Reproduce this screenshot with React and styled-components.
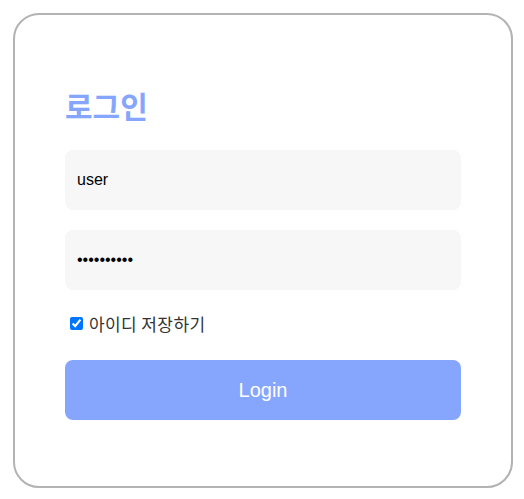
import React from "react";
import styled, { createGlobalStyle } from "styled-components";

const Global = createGlobalStyle`
  html, body { margin: 0; padding: 0; background: #ffffff; }
  body { font-family: "Liberation Sans", "Noto Sans CJK KR", sans-serif; }
`;

const Page = styled.div`
  padding: 13px;
`;

const Card = styled.form`
  box-sizing: border-box;
  width: 500px;
  height: 475px;
  border: 2px solid #b3b3b3;
  border-radius: 26px;
  padding: 68px 50px 0;
  display: flex;
  flex-direction: column;
`;

const Title = styled.h2`
  margin: 0 0 23px;
  font-family: "Noto Sans CJK KR", "Liberation Sans", sans-serif;
  font-size: 30px;
  font-weight: 700;
  line-height: 44px;
  color: #86a6fe;
`;

const Input = styled.input`
  box-sizing: border-box;
  width: 396px;
  height: 60px;
  border: none;
  outline: none;
  border-radius: 8px;
  background: #f7f7f7;
  padding: 0 12px;
  margin-bottom: ${(p) => p.$gap}px;
  font-family: "Liberation Sans", "Noto Sans CJK KR", sans-serif;
  font-size: 16px;
  color: #000;
`;

const CheckRow = styled.label`
  display: flex;
  align-items: center;
  gap: 6px;
  height: 26px;
  margin-bottom: 24px;
  font-family: "Noto Sans CJK KR", "Liberation Sans", sans-serif;
  font-size: 17px;
  letter-spacing: 0.4px;
  color: #333;
  padding-left: 2px;
`;

const Check = styled.input`
  margin: 0 0 0 3px;
  width: 13px;
  height: 13px;
  accent-color: #0075ff;
`;

const Button = styled.button`
  width: 396px;
  height: 60px;
  border: none;
  border-radius: 8px;
  background: #86a6fe;
  color: #ffffff;
  font-family: "Liberation Sans", "Noto Sans CJK KR", sans-serif;
  font-size: 20px;
  cursor: pointer;
`;

export default function App() {
  return (
    <>
      <Global />
      <Page>
        <Card onSubmit={(e) => e.preventDefault()}>
          <Title>로그인</Title>
          <Input $gap={20} type="text" defaultValue="user" />
          <Input $gap={20} type="password" defaultValue="1234567890" />
          <CheckRow>
            <Check type="checkbox" defaultChecked />
            아이디 저장하기
          </CheckRow>
          <Button type="submit">Login</Button>
        </Card>
      </Page>
    </>
  );
}
